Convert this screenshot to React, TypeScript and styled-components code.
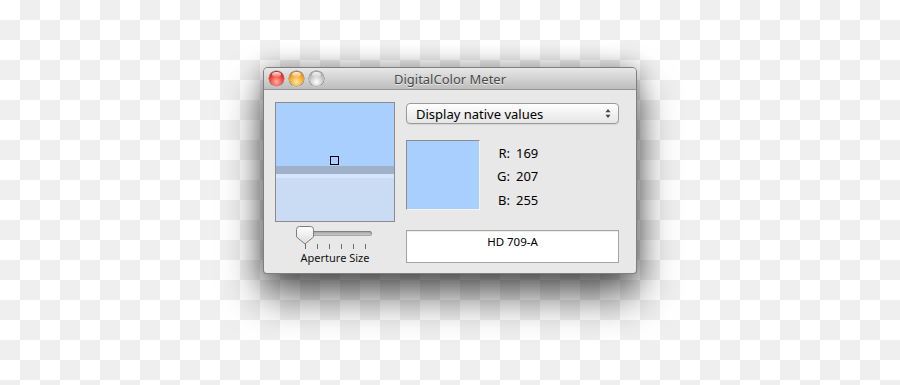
import React from "react";
import styled, { createGlobalStyle } from "styled-components";

const GlobalStyle = createGlobalStyle`
  html, body {
    margin: 0;
    padding: 0;
  }
  body {
    font-family: "Lucida Grande", "Noto Sans", sans-serif;
    background: repeating-conic-gradient(#efefef 0 25%, #ffffff 0 50%) 0 0 / 40px 40px;
  }
`;

const Page = styled.div`
  width: 900px;
  height: 385px;
  padding: 67px 0 0 263px;
  box-sizing: border-box;
`;

const Window = styled.div`
  width: 374px;
  height: 207px;
  box-sizing: border-box;
  border: 1px solid rgba(0, 0, 0, 0.45);
  border-radius: 5px 5px 4px 4px;
  background: #e8e8e8;
  box-shadow: 0 22px 40px rgba(0, 0, 0, 0.62), 0 0 22px rgba(0, 0, 0, 0.32);
  display: flex;
  flex-direction: column;
  overflow: hidden;
`;

const TitleBar = styled.div`
  position: relative;
  height: 21px;
  flex: none;
  display: flex;
  align-items: center;
  gap: 5px;
  padding-left: 5px;
  background: linear-gradient(#e8e8e8, #bdbdbd);
  border-bottom: 1px solid #959595;
`;

const Title = styled.div`
  position: absolute;
  left: 0;
  right: 0;
  text-align: center;
  font-size: 13px;
  color: #4a4a4a;
  text-shadow: 0 1px 0 rgba(255, 255, 255, 0.6);
  pointer-events: none;
`;

const palettes = {
  red: ["#ffb0a4", "#ee3a30", "#8a0e0a"],
  orange: ["#ffe7a0", "#f3a226", "#985404"],
  grey: ["#ffffff", "#c2c2c2", "#7a7a7a"],
};

const Light = styled.div<{ $kind: keyof typeof palettes }>`
  position: relative;
  width: 15px;
  height: 15px;
  border-radius: 50%;
  background: ${(p) =>
    `radial-gradient(circle at 50% 72%, ${palettes[p.$kind][0]} 0, ${palettes[p.$kind][1]} 55%, ${palettes[p.$kind][2]} 100%)`};
  box-shadow: 0 0 0 0.5px rgba(0, 0, 0, 0.45), 0 1px 1px rgba(255, 255, 255, 0.5);

  &::after {
    content: "";
    position: absolute;
    left: 3px;
    top: 1px;
    width: 9px;
    height: 5px;
    border-radius: 50%;
    background: linear-gradient(rgba(255, 255, 255, 0.95), rgba(255, 255, 255, 0.15));
  }
`;

const Body = styled.div`
  flex: 1;
  display: flex;
  gap: 11px;
  padding: 12px 0 0 11px;
`;

const LeftColumn = styled.div`
  width: 120px;
  display: flex;
  flex-direction: column;
  align-items: center;
`;

const Preview = styled.div`
  position: relative;
  width: 120px;
  height: 120px;
  box-sizing: border-box;
  border: 1px solid #8c8c8c;
  display: flex;
  flex-direction: column;
`;

const Stripe = styled.div<{ $color: string; $h?: number }>`
  background: ${(p) => p.$color};
  height: ${(p) => (p.$h ? `${p.$h}px` : "auto")};
  flex: ${(p) => (p.$h ? "none" : "1")};
`;

const Marker = styled.div`
  position: absolute;
  left: 54px;
  top: 53px;
  width: 9px;
  height: 9px;
  box-sizing: border-box;
  border: 1px solid #000;
`;

const Slider = styled.div`
  position: relative;
  width: 120px;
  height: 28px;
  margin-top: 4px;
`;

const Track = styled.div`
  position: absolute;
  left: 25px;
  top: 5px;
  width: 72px;
  height: 5px;
  border-radius: 3px;
  background: linear-gradient(#9a9a9a, #d6d6d6);
  box-shadow: inset 0 0 0 1px rgba(0, 0, 0, 0.2);
`;

const Ticks = styled.div`
  position: absolute;
  left: 30px;
  top: 18px;
  width: 61px;
  display: flex;
  justify-content: space-between;
`;

const Tick = styled.div`
  width: 1px;
  height: 5px;
  background: #6a6a6a;
`;

const Knob = styled.svg`
  position: absolute;
  left: 21px;
  top: 0;
`;

const SliderLabel = styled.div`
  font-size: 11px;
  color: #111;
  margin-top: -4px;
`;

const RightColumn = styled.div`
  width: 213px;
  display: flex;
  flex-direction: column;
  padding-top: 1px;
`;

const Popup = styled.div`
  height: 21px;
  box-sizing: border-box;
  border: 1px solid #9a9a9a;
  border-radius: 4px;
  background: linear-gradient(#ffffff, #f1f1f1 50%, #e6e6e6);
  box-shadow: 0 1px 1px rgba(0, 0, 0, 0.08);
  display: flex;
  align-items: center;
  justify-content: space-between;
  padding: 0 7px 0 9px;
  font-size: 13px;
  color: #000;
`;

const ColorRow = styled.div`
  display: flex;
  gap: 17px;
  margin-top: 16px;
`;

const Swatch = styled.div`
  width: 74px;
  height: 70px;
  box-sizing: border-box;
  background: #a9cfff;
  border: 1px solid #8c8c8c;
  border-right-color: #f4f4f4;
  border-bottom-color: #f4f4f4;
`;

const Values = styled.div`
  display: grid;
  grid-template-columns: auto auto;
  grid-auto-rows: 23.5px;
  column-gap: 6px;
  align-items: center;
  padding-top: 1px;
  font-size: 13px;
  color: #000;
`;

const ValueLabel = styled.span`
  text-align: right;
`;

const InfoBox = styled.div`
  margin-top: 18px;
  height: 33px;
  box-sizing: border-box;
  border: 1px solid #a5a5a5;
  background: #fff;
  box-shadow: inset 0 1px 1px rgba(0, 0, 0, 0.08);
  text-align: center;
  font-size: 11.5px;
  color: #000;
  padding-top: 3px;
`;

const PopupArrows = () => (
  <svg width="6" height="11" viewBox="0 0 6 11">
    <path d="M3 1 L5.5 4.2 L0.5 4.2 Z" fill="#444" />
    <path d="M3 10 L5.5 6.8 L0.5 6.8 Z" fill="#444" />
  </svg>
);

const values: [string, number][] = [
  ["R:", 169],
  ["G:", 207],
  ["B:", 255],
];

export default function App() {
  return (
    <>
      <GlobalStyle />
      <Page>
        <Window>
          <TitleBar>
            <Light $kind="red" />
            <Light $kind="orange" />
            <Light $kind="grey" />
            <Title>DigitalColor Meter</Title>
          </TitleBar>
          <Body>
            <LeftColumn>
              <Preview>
                <Stripe $color="#a9cfff" $h={63} />
                <Stripe $color="#9fb1c9" $h={8} />
                <Stripe $color="#d5e6fc" $h={4} />
                <Stripe $color="#cadcf4" />
                <Marker />
              </Preview>
              <Slider>
                <Track />
                <Ticks>
                  {Array.from({ length: 6 }).map((_, i) => (
                    <Tick key={i} />
                  ))}
                </Ticks>
                <Knob width="18" height="19" viewBox="0 0 18 19">
                  <defs>
                    <linearGradient id="knob" x1="0" y1="0" x2="0" y2="1">
                      <stop offset="0" stopColor="#ffffff" />
                      <stop offset="1" stopColor="#dcdcdc" />
                    </linearGradient>
                  </defs>
                  <path
                    d="M3.5 0.5 H14.5 A3 3 0 0 1 17.5 3.5 V11 L9 18 L0.5 11 V3.5 A3 3 0 0 1 3.5 0.5 Z"
                    fill="url(#knob)"
                    stroke="#7c7c7c"
                  />
                </Knob>
              </Slider>
              <SliderLabel>Aperture Size</SliderLabel>
            </LeftColumn>
            <RightColumn>
              <Popup>
                <span>Display native values</span>
                <PopupArrows />
              </Popup>
              <ColorRow>
                <Swatch />
                <Values>
                  {values.map(([label, value]) => (
                    <React.Fragment key={label}>
                      <ValueLabel>{label}</ValueLabel>
                      <span>{value}</span>
                    </React.Fragment>
                  ))}
                </Values>
              </ColorRow>
              <InfoBox>HD 709-A</InfoBox>
            </RightColumn>
          </Body>
        </Window>
      </Page>
    </>
  );
}
